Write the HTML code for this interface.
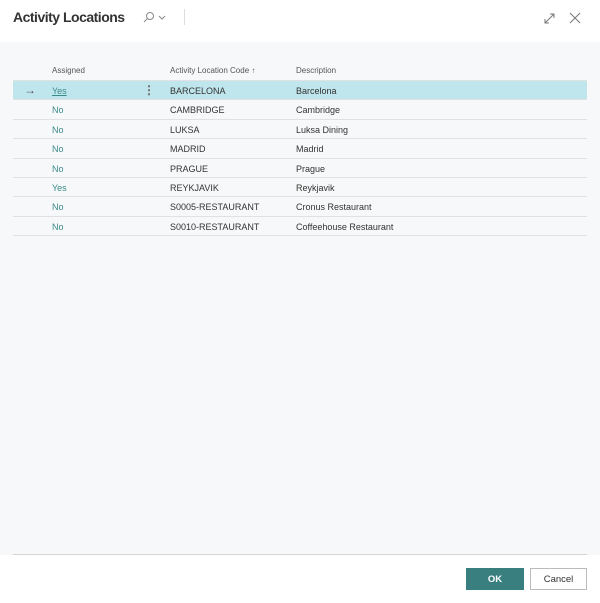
<!DOCTYPE html>
<html><head><style>
*{margin:0;padding:0;box-sizing:border-box}
body{width:600px;height:603px;background:#fff;font-family:"Liberation Sans",sans-serif;position:relative;overflow:hidden;color:#212121}
.title{position:absolute;left:13px;top:9px;font-size:14px;font-weight:bold;color:#333;letter-spacing:-0.5px}
.panel{position:absolute;left:0;top:42px;width:600px;height:513px;background:#f7f8f9}
.hline{position:absolute;left:13px;top:554px;width:574px;height:1px;background:#d4d4d4}
.hdr{position:absolute;top:66px;font-size:8px;color:#555}
.row{position:absolute;left:13px;width:574px;height:19.4px;border-bottom:1px solid #e1e1e1;font-size:9px}
.row span{position:absolute;top:5px}
.a{left:39px;color:#3a8a8a}
.c{left:157px;color:#333}
.d{left:283px;color:#333}
.sel{background:#bfe6ec}
.btn{position:absolute;top:568px;height:22px;font-size:9.5px;display:flex;align-items:center;justify-content:center}
</style></head><body>
<div class="title">Activity Locations</div>
<svg style="position:absolute;left:142px;top:11px" width="28" height="14" viewBox="0 0 28 14" fill="none" stroke="#888" stroke-width="1">
<circle cx="8" cy="5" r="3.5"/><path d="M5.5 7.5 L2 11"/><path d="M17 5 L20 8 L23 5"/></svg>
<div style="position:absolute;left:184px;top:9px;width:1px;height:16px;background:#ddd"></div>
<svg style="position:absolute;left:543px;top:11px" width="40" height="14" viewBox="0 0 40 14" fill="none" stroke="#777" stroke-width="1">
<path d="M2 12 L11 3 M7 3 H11 V7 M2 8 V12 H6"/><path d="M27 2 L37 12 M37 2 L27 12"/></svg>
<div class="panel"></div>
<div class="hdr" style="left:52px">Assigned</div>
<div class="hdr" style="left:170px">Activity Location Code ↑</div>
<div class="hdr" style="left:296px">Description</div>
<div style="position:absolute;left:13px;top:80px;width:574px;height:1px;background:#e1e1e1"></div>
<div class="row sel" style="top:81px"><span style="left:11px;color:#555;font-size:12px;top:2px">→</span><span class="a" style="text-decoration:underline">Yes</span><span style="left:130px;color:#666;top:2px;font-size:12px;font-weight:bold">⋮</span><span class="c">BARCELONA</span><span class="d">Barcelona</span></div>
<div class="row" style="top:100.4px"><span class="a">No</span><span class="c">CAMBRIDGE</span><span class="d">Cambridge</span></div>
<div class="row" style="top:119.8px"><span class="a">No</span><span class="c">LUKSA</span><span class="d">Luksa Dining</span></div>
<div class="row" style="top:139.2px"><span class="a">No</span><span class="c">MADRID</span><span class="d">Madrid</span></div>
<div class="row" style="top:158.6px"><span class="a">No</span><span class="c">PRAGUE</span><span class="d">Prague</span></div>
<div class="row" style="top:178px"><span class="a">Yes</span><span class="c">REYKJAVIK</span><span class="d">Reykjavik</span></div>
<div class="row" style="top:197.4px"><span class="a">No</span><span class="c">S0005-RESTAURANT</span><span class="d">Cronus Restaurant</span></div>
<div class="row" style="top:216.8px"><span class="a">No</span><span class="c">S0010-RESTAURANT</span><span class="d">Coffeehouse Restaurant</span></div>
<div class="hline"></div>
<div class="btn" style="left:466px;width:58px;background:#3a7f80;color:#fff;font-weight:bold">OK</div>
<div class="btn" style="left:530px;width:57px;border:1px solid #bbb;color:#333;background:#fff">Cancel</div>
</body></html>
